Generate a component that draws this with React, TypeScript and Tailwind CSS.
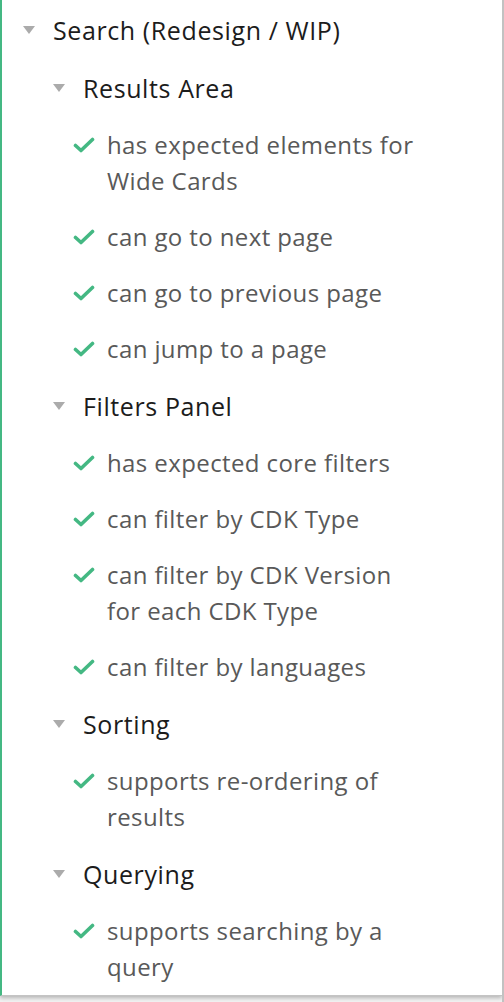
import React from 'react';

type Test = { title: string };
type Group = { title: string; tests: Test[] };

const groups: Group[] = [
  {
    title: 'Results Area',
    tests: [
      { title: 'has expected elements for Wide Cards' },
      { title: 'can go to next page' },
      { title: 'can go to previous page' },
      { title: 'can jump to a page' },
    ],
  },
  {
    title: 'Filters Panel',
    tests: [
      { title: 'has expected core filters' },
      { title: 'can filter by CDK Type' },
      { title: 'can filter by CDK Version for each CDK Type' },
      { title: 'can filter by languages' },
    ],
  },
  {
    title: 'Sorting',
    tests: [{ title: 'supports re-ordering of results' }],
  },
  {
    title: 'Querying',
    tests: [{ title: 'supports searching by a query' }],
  },
];

const Caret = () => (
  <svg width="12" height="8" viewBox="0 0 12 8" className="shrink-0">
    <path d="M0 0 L12 0 L6 8 Z" fill="#ababab" />
  </svg>
);

const Check = () => (
  <svg width="22" height="16" viewBox="0 0 22 16" className="shrink-0 mt-[10px]">
    <path
      d="M2.5 8.5 L8 13.5 L19.5 2.5"
      fill="none"
      stroke="#44b883"
      strokeWidth="3.6"
      strokeLinecap="round"
      strokeLinejoin="round"
    />
  </svg>
);

const SuiteRow = ({ title, indent }: { title: string; indent: string }) => (
  <div className={`flex items-center py-[11px] ${indent}`}>
    <Caret />
    <span className="ml-[18px] text-[25px] leading-[36px] tracking-[0.6px] text-[#1c1c1c]">{title}</span>
  </div>
);

export default function App() {
  return (
    <div
      className="relative w-[504px] h-[1002px] bg-[#f2f2f2] overflow-hidden"
      style={{ fontFamily: '"Open Sans", Lato, sans-serif' }}
    >
      <div className="w-[502px] bg-white border-l-2 border-[#44b883] pt-px shadow-[0_2px_4px_rgba(0,0,0,0.25)] border-b border-b-[#c4c4c4]">
        <SuiteRow title="Search (Redesign / WIP)" indent="pl-[21px]" />
        {groups.map((g) => (
          <div key={g.title}>
            <SuiteRow title={g.title} indent="pl-[51px]" />
            {g.tests.map((t) => (
              <div key={t.title} className="flex items-start py-[10px] pl-[71px] pr-[80px]">
                <Check />
                <span className="ml-[12px] text-[24px] leading-[36px] tracking-[0.4px] text-[#595959]">
                  {t.title}
                </span>
              </div>
            ))}
          </div>
        ))}
      </div>
      <div className="absolute top-0 right-0 w-[2px] h-full bg-[#c2c2c2]" />
    </div>
  );
}
